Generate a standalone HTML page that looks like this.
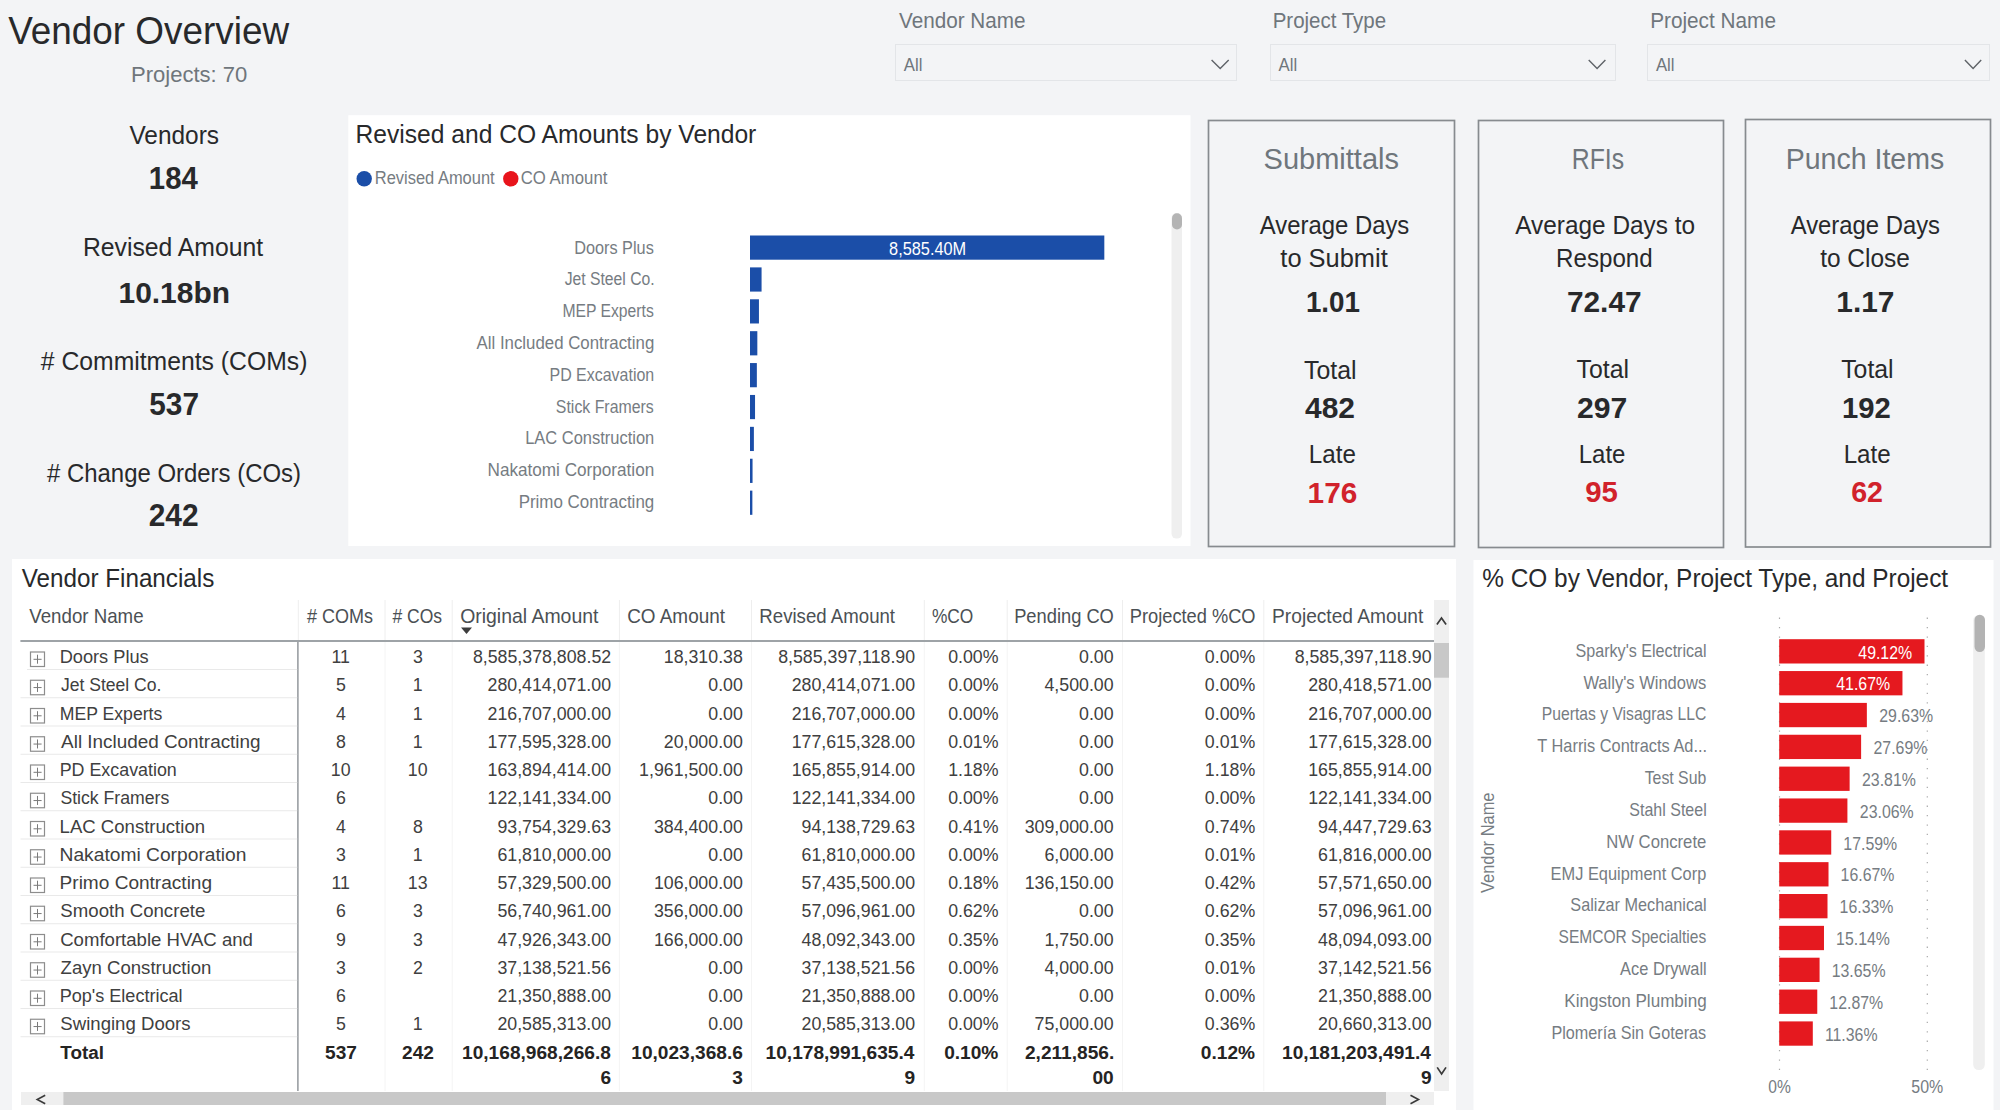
<!DOCTYPE html>
<html><head><meta charset="utf-8"><title>Vendor Overview</title>
<style>
html,body{margin:0;padding:0;background:#f3f4f6;width:2000px;height:1110px;overflow:hidden}
svg{display:block;font-family:"Liberation Sans",sans-serif}
</style></head><body>
<svg width="2000" height="1110" viewBox="0 0 2000 1110">
<rect x="0" y="0" width="2000" height="1110" fill="#f3f4f6"/>
<rect x="895.5" y="44.5" width="341.0" height="36.0" fill="none" stroke="#e3e5e8" stroke-width="1"/>
<rect x="1270.5" y="44.5" width="345.0" height="36.0" fill="none" stroke="#e3e5e8" stroke-width="1"/>
<rect x="1647.5" y="44.5" width="342.0" height="36.0" fill="none" stroke="#e3e5e8" stroke-width="1"/>
<polyline points="1211.6,60 1220.2,68.6 1228.7,60" fill="none" stroke="#5f6368" stroke-width="1.4"/>
<polyline points="1588.7,60 1597.1,68.6 1605.4,60" fill="none" stroke="#5f6368" stroke-width="1.4"/>
<polyline points="1964.9,60 1973.1,68.6 1981.2,60" fill="none" stroke="#5f6368" stroke-width="1.4"/>
<rect x="348.30" y="115.20" width="842.20" height="430.80" fill="#ffffff" />
<circle cx="364.2" cy="178.7" r="7.7" fill="#1b4ea8"/>
<circle cx="510.8" cy="178.8" r="7.7" fill="#e8141c"/>
<rect x="750.00" y="235.50" width="354.32" height="24.20" fill="#1b4ea8" />
<rect x="750.00" y="267.39" width="11.57" height="24.20" fill="#1b4ea8" />
<rect x="750.00" y="299.28" width="8.94" height="24.20" fill="#1b4ea8" />
<rect x="750.00" y="331.17" width="7.33" height="24.20" fill="#1b4ea8" />
<rect x="750.00" y="363.06" width="6.85" height="24.20" fill="#1b4ea8" />
<rect x="750.00" y="394.95" width="5.04" height="24.20" fill="#1b4ea8" />
<rect x="750.00" y="426.84" width="3.88" height="24.20" fill="#1b4ea8" />
<rect x="750.00" y="458.73" width="2.55" height="24.20" fill="#1b4ea8" />
<rect x="750.00" y="490.62" width="2.37" height="24.20" fill="#1b4ea8" />
<rect x="1171.5" y="213" width="10.5" height="325.6" rx="5" fill="#efefef"/>
<rect x="1172" y="213.3" width="10" height="16.2" rx="5" fill="#b4b4b4"/>
<rect x="1208.5" y="120.5" width="246.0" height="426.0" fill="none" stroke="#878b8f" stroke-width="1.7"/>
<rect x="1478.5" y="120.5" width="245.0" height="427.0" fill="none" stroke="#878b8f" stroke-width="1.7"/>
<rect x="1745.5" y="119.5" width="245.0" height="427.5" fill="none" stroke="#878b8f" stroke-width="1.7"/>
<rect x="12.00" y="559.00" width="1444.00" height="551.00" fill="#ffffff" />
<line x1="298.30" y1="600.00" x2="298.30" y2="640.00" stroke="#eeeeee" stroke-width="1" />
<line x1="385.00" y1="600.00" x2="385.00" y2="640.00" stroke="#eeeeee" stroke-width="1" />
<line x1="452.20" y1="600.00" x2="452.20" y2="640.00" stroke="#eeeeee" stroke-width="1" />
<line x1="619.40" y1="600.00" x2="619.40" y2="640.00" stroke="#eeeeee" stroke-width="1" />
<line x1="751.50" y1="600.00" x2="751.50" y2="640.00" stroke="#eeeeee" stroke-width="1" />
<line x1="924.30" y1="600.00" x2="924.30" y2="640.00" stroke="#eeeeee" stroke-width="1" />
<line x1="1007.20" y1="600.00" x2="1007.20" y2="640.00" stroke="#eeeeee" stroke-width="1" />
<line x1="1122.50" y1="600.00" x2="1122.50" y2="640.00" stroke="#eeeeee" stroke-width="1" />
<line x1="1263.80" y1="600.00" x2="1263.80" y2="640.00" stroke="#eeeeee" stroke-width="1" />
<line x1="385.00" y1="642.00" x2="385.00" y2="1091.00" stroke="#f4f4f4" stroke-width="1" />
<line x1="452.20" y1="642.00" x2="452.20" y2="1091.00" stroke="#f4f4f4" stroke-width="1" />
<line x1="619.40" y1="642.00" x2="619.40" y2="1091.00" stroke="#f4f4f4" stroke-width="1" />
<line x1="751.50" y1="642.00" x2="751.50" y2="1091.00" stroke="#f4f4f4" stroke-width="1" />
<line x1="924.30" y1="642.00" x2="924.30" y2="1091.00" stroke="#f4f4f4" stroke-width="1" />
<line x1="1007.20" y1="642.00" x2="1007.20" y2="1091.00" stroke="#f4f4f4" stroke-width="1" />
<line x1="1122.50" y1="642.00" x2="1122.50" y2="1091.00" stroke="#f4f4f4" stroke-width="1" />
<line x1="1263.80" y1="642.00" x2="1263.80" y2="1091.00" stroke="#f4f4f4" stroke-width="1" />
<rect x="20.40" y="640.00" width="1413.60" height="2.00" fill="#9ea3a7" />
<rect x="297.20" y="642.00" width="1.40" height="449.00" fill="#8c9196" />
<rect x="27.00" y="669.00" width="270.20" height="1.00" fill="#e9e9e9" />
<rect x="20.50" y="697.25" width="276.70" height="1.00" fill="#e9e9e9" />
<rect x="20.50" y="725.50" width="276.70" height="1.00" fill="#e9e9e9" />
<rect x="20.50" y="753.75" width="276.70" height="1.00" fill="#e9e9e9" />
<rect x="20.50" y="782.00" width="276.70" height="1.00" fill="#e9e9e9" />
<rect x="20.50" y="810.25" width="276.70" height="1.00" fill="#e9e9e9" />
<rect x="20.50" y="838.50" width="276.70" height="1.00" fill="#e9e9e9" />
<rect x="20.50" y="866.75" width="276.70" height="1.00" fill="#e9e9e9" />
<rect x="20.50" y="895.00" width="276.70" height="1.00" fill="#e9e9e9" />
<rect x="20.50" y="923.25" width="276.70" height="1.00" fill="#e9e9e9" />
<rect x="20.50" y="951.50" width="276.70" height="1.00" fill="#e9e9e9" />
<rect x="20.50" y="979.75" width="276.70" height="1.00" fill="#e9e9e9" />
<rect x="20.50" y="1008.00" width="276.70" height="1.00" fill="#e9e9e9" />
<rect x="20.50" y="1036.25" width="276.70" height="1.00" fill="#e9e9e9" />
<rect x="30.5" y="652.00" width="14" height="14.5" fill="none" stroke="#8d8d8d" stroke-width="1.2"/>
<line x1="33.5" y1="659.30" x2="41.6" y2="659.30" stroke="#7a7a7a" stroke-width="1"/>
<line x1="37.5" y1="654.70" x2="37.5" y2="663.70" stroke="#7a7a7a" stroke-width="1"/>
<rect x="30.5" y="680.25" width="14" height="14.5" fill="none" stroke="#8d8d8d" stroke-width="1.2"/>
<line x1="33.5" y1="687.55" x2="41.6" y2="687.55" stroke="#7a7a7a" stroke-width="1"/>
<line x1="37.5" y1="682.95" x2="37.5" y2="691.95" stroke="#7a7a7a" stroke-width="1"/>
<rect x="30.5" y="708.50" width="14" height="14.5" fill="none" stroke="#8d8d8d" stroke-width="1.2"/>
<line x1="33.5" y1="715.80" x2="41.6" y2="715.80" stroke="#7a7a7a" stroke-width="1"/>
<line x1="37.5" y1="711.20" x2="37.5" y2="720.20" stroke="#7a7a7a" stroke-width="1"/>
<rect x="30.5" y="736.75" width="14" height="14.5" fill="none" stroke="#8d8d8d" stroke-width="1.2"/>
<line x1="33.5" y1="744.05" x2="41.6" y2="744.05" stroke="#7a7a7a" stroke-width="1"/>
<line x1="37.5" y1="739.45" x2="37.5" y2="748.45" stroke="#7a7a7a" stroke-width="1"/>
<rect x="30.5" y="765.00" width="14" height="14.5" fill="none" stroke="#8d8d8d" stroke-width="1.2"/>
<line x1="33.5" y1="772.30" x2="41.6" y2="772.30" stroke="#7a7a7a" stroke-width="1"/>
<line x1="37.5" y1="767.70" x2="37.5" y2="776.70" stroke="#7a7a7a" stroke-width="1"/>
<rect x="30.5" y="793.25" width="14" height="14.5" fill="none" stroke="#8d8d8d" stroke-width="1.2"/>
<line x1="33.5" y1="800.55" x2="41.6" y2="800.55" stroke="#7a7a7a" stroke-width="1"/>
<line x1="37.5" y1="795.95" x2="37.5" y2="804.95" stroke="#7a7a7a" stroke-width="1"/>
<rect x="30.5" y="821.50" width="14" height="14.5" fill="none" stroke="#8d8d8d" stroke-width="1.2"/>
<line x1="33.5" y1="828.80" x2="41.6" y2="828.80" stroke="#7a7a7a" stroke-width="1"/>
<line x1="37.5" y1="824.20" x2="37.5" y2="833.20" stroke="#7a7a7a" stroke-width="1"/>
<rect x="30.5" y="849.75" width="14" height="14.5" fill="none" stroke="#8d8d8d" stroke-width="1.2"/>
<line x1="33.5" y1="857.05" x2="41.6" y2="857.05" stroke="#7a7a7a" stroke-width="1"/>
<line x1="37.5" y1="852.45" x2="37.5" y2="861.45" stroke="#7a7a7a" stroke-width="1"/>
<rect x="30.5" y="878.00" width="14" height="14.5" fill="none" stroke="#8d8d8d" stroke-width="1.2"/>
<line x1="33.5" y1="885.30" x2="41.6" y2="885.30" stroke="#7a7a7a" stroke-width="1"/>
<line x1="37.5" y1="880.70" x2="37.5" y2="889.70" stroke="#7a7a7a" stroke-width="1"/>
<rect x="30.5" y="906.25" width="14" height="14.5" fill="none" stroke="#8d8d8d" stroke-width="1.2"/>
<line x1="33.5" y1="913.55" x2="41.6" y2="913.55" stroke="#7a7a7a" stroke-width="1"/>
<line x1="37.5" y1="908.95" x2="37.5" y2="917.95" stroke="#7a7a7a" stroke-width="1"/>
<rect x="30.5" y="934.50" width="14" height="14.5" fill="none" stroke="#8d8d8d" stroke-width="1.2"/>
<line x1="33.5" y1="941.80" x2="41.6" y2="941.80" stroke="#7a7a7a" stroke-width="1"/>
<line x1="37.5" y1="937.20" x2="37.5" y2="946.20" stroke="#7a7a7a" stroke-width="1"/>
<rect x="30.5" y="962.75" width="14" height="14.5" fill="none" stroke="#8d8d8d" stroke-width="1.2"/>
<line x1="33.5" y1="970.05" x2="41.6" y2="970.05" stroke="#7a7a7a" stroke-width="1"/>
<line x1="37.5" y1="965.45" x2="37.5" y2="974.45" stroke="#7a7a7a" stroke-width="1"/>
<rect x="30.5" y="991.00" width="14" height="14.5" fill="none" stroke="#8d8d8d" stroke-width="1.2"/>
<line x1="33.5" y1="998.30" x2="41.6" y2="998.30" stroke="#7a7a7a" stroke-width="1"/>
<line x1="37.5" y1="993.70" x2="37.5" y2="1002.70" stroke="#7a7a7a" stroke-width="1"/>
<rect x="30.5" y="1019.25" width="14" height="14.5" fill="none" stroke="#8d8d8d" stroke-width="1.2"/>
<line x1="33.5" y1="1026.55" x2="41.6" y2="1026.55" stroke="#7a7a7a" stroke-width="1"/>
<line x1="37.5" y1="1021.95" x2="37.5" y2="1030.95" stroke="#7a7a7a" stroke-width="1"/>
<polygon points="461,627.5 472,627.5 466.5,634" fill="#3d3d3d"/>
<rect x="1434.00" y="600.00" width="15.00" height="491.00" fill="#efefef" />
<rect x="1434.00" y="643.00" width="15.00" height="34.70" fill="#c8c8c8" />
<polyline points="1436.9,624.4 1441.5,618 1446.1,624.4" fill="none" stroke="#3a3a3a" stroke-width="1.7"/>
<polyline points="1437.2,1067.4 1441.6,1074 1446,1067.4" fill="none" stroke="#3a3a3a" stroke-width="1.7"/>
<rect x="21.00" y="1092.00" width="1413.00" height="13.00" fill="#efefef" />
<rect x="63.40" y="1092.00" width="1322.60" height="13.00" fill="#c8c8c8" />
<polyline points="45.2,1095.2 37.2,1099.5 45.2,1103.8" fill="none" stroke="#3a3a3a" stroke-width="1.6"/>
<polyline points="1410.5,1095.2 1418.5,1099.5 1410.5,1103.8" fill="none" stroke="#3a3a3a" stroke-width="1.6"/>
<rect x="1473.50" y="560.00" width="520.00" height="550.00" fill="#ffffff" />
<line x1="1779.5" y1="617.6" x2="1779.5" y2="1071" stroke="#a9a9a9" stroke-width="1.2" stroke-dasharray="1.3,8.1"/>
<line x1="1927.3" y1="617.6" x2="1927.3" y2="1071" stroke="#a9a9a9" stroke-width="1.2" stroke-dasharray="1.3,8.1"/>
<rect x="1779.20" y="639.20" width="145.30" height="24.30" fill="#e5191f" />
<rect x="1779.20" y="671.05" width="123.26" height="24.30" fill="#e5191f" />
<rect x="1779.20" y="702.90" width="87.65" height="24.30" fill="#e5191f" />
<rect x="1779.20" y="734.75" width="81.91" height="24.30" fill="#e5191f" />
<rect x="1779.20" y="766.60" width="70.43" height="24.30" fill="#e5191f" />
<rect x="1779.20" y="798.45" width="68.21" height="24.30" fill="#e5191f" />
<rect x="1779.20" y="830.30" width="52.03" height="24.30" fill="#e5191f" />
<rect x="1779.20" y="862.15" width="49.31" height="24.30" fill="#e5191f" />
<rect x="1779.20" y="894.00" width="48.30" height="24.30" fill="#e5191f" />
<rect x="1779.20" y="925.85" width="44.78" height="24.30" fill="#e5191f" />
<rect x="1779.20" y="957.70" width="40.38" height="24.30" fill="#e5191f" />
<rect x="1779.20" y="989.55" width="38.07" height="24.30" fill="#e5191f" />
<rect x="1779.20" y="1021.40" width="33.60" height="24.30" fill="#e5191f" />
<rect x="1973.2" y="615" width="11.6" height="455" rx="5.5" fill="#efefef"/>
<rect x="1974.5" y="614.8" width="10.5" height="37.2" rx="5.2" fill="#b3b3b3"/>
<text transform="translate(1494,893) rotate(-90)" font-size="18.2" fill="#767c82" textLength="100.5" lengthAdjust="spacingAndGlyphs">Vendor Name</text>
<text x="8.20" y="44.20" font-size="38.52" fill="#28292b" textLength="280.91" lengthAdjust="spacingAndGlyphs">Vendor Overview</text>
<text x="130.94" y="82.20" font-size="21.37" fill="#6f767c" textLength="116.46" lengthAdjust="spacingAndGlyphs">Projects: 70</text>
<text x="129.40" y="144.10" font-size="26.16" fill="#28292b" textLength="89.63" lengthAdjust="spacingAndGlyphs">Vendors</text>
<text x="148.84" y="189.00" font-size="30.81" fill="#28292b" font-weight="bold" textLength="48.95" lengthAdjust="spacingAndGlyphs">184</text>
<text x="82.94" y="256.20" font-size="26.16" fill="#28292b" textLength="180.21" lengthAdjust="spacingAndGlyphs">Revised Amount</text>
<text x="118.50" y="303.00" font-size="30.23" fill="#28292b" font-weight="bold" textLength="111.52" lengthAdjust="spacingAndGlyphs">10.18bn</text>
<text x="40.80" y="369.70" font-size="26.16" fill="#28292b" textLength="266.61" lengthAdjust="spacingAndGlyphs"># Commitments (COMs)</text>
<text x="149.31" y="414.80" font-size="30.81" fill="#28292b" font-weight="bold" textLength="49.67" lengthAdjust="spacingAndGlyphs">537</text>
<text x="47.00" y="482.30" font-size="26.16" fill="#28292b" textLength="253.97" lengthAdjust="spacingAndGlyphs"># Change Orders (COs)</text>
<text x="148.70" y="525.50" font-size="30.81" fill="#28292b" font-weight="bold" textLength="49.88" lengthAdjust="spacingAndGlyphs">242</text>
<text x="899.00" y="27.60" font-size="22.09" fill="#6f767c" textLength="126.55" lengthAdjust="spacingAndGlyphs">Vendor Name</text>
<text x="1272.67" y="27.60" font-size="22.09" fill="#6f767c" textLength="113.47" lengthAdjust="spacingAndGlyphs">Project Type</text>
<text x="1650.14" y="27.80" font-size="22.09" fill="#6f767c" textLength="125.81" lengthAdjust="spacingAndGlyphs">Project Name</text>
<text x="903.80" y="70.70" font-size="18.46" fill="#6f767c" textLength="18.64" lengthAdjust="spacingAndGlyphs">All</text>
<text x="1278.60" y="70.70" font-size="18.46" fill="#6f767c" textLength="18.64" lengthAdjust="spacingAndGlyphs">All</text>
<text x="1655.90" y="70.70" font-size="18.46" fill="#6f767c" textLength="18.64" lengthAdjust="spacingAndGlyphs">All</text>
<text x="355.54" y="142.70" font-size="25.58" fill="#28292b" textLength="400.78" lengthAdjust="spacingAndGlyphs">Revised and CO Amounts by Vendor</text>
<text x="374.79" y="184.20" font-size="18.02" fill="#767c82" textLength="119.87" lengthAdjust="spacingAndGlyphs">Revised Amount</text>
<text x="520.77" y="184.20" font-size="18.02" fill="#767c82" textLength="86.59" lengthAdjust="spacingAndGlyphs">CO Amount</text>
<text x="574.20" y="253.60" font-size="17.44" fill="#767c82" textLength="79.59" lengthAdjust="spacingAndGlyphs">Doors Plus</text>
<text x="564.64" y="285.40" font-size="17.44" fill="#767c82" textLength="90.04" lengthAdjust="spacingAndGlyphs">Jet Steel Co.</text>
<text x="562.45" y="317.20" font-size="17.44" fill="#767c82" textLength="91.32" lengthAdjust="spacingAndGlyphs">MEP Experts</text>
<text x="476.50" y="349.00" font-size="17.44" fill="#767c82" textLength="177.75" lengthAdjust="spacingAndGlyphs">All Included Contracting</text>
<text x="549.52" y="380.80" font-size="17.44" fill="#767c82" textLength="104.67" lengthAdjust="spacingAndGlyphs">PD Excavation</text>
<text x="555.86" y="412.60" font-size="17.44" fill="#767c82" textLength="97.91" lengthAdjust="spacingAndGlyphs">Stick Framers</text>
<text x="525.18" y="444.40" font-size="17.44" fill="#767c82" textLength="129.04" lengthAdjust="spacingAndGlyphs">LAC Construction</text>
<text x="487.53" y="476.20" font-size="17.44" fill="#767c82" textLength="166.73" lengthAdjust="spacingAndGlyphs">Nakatomi Corporation</text>
<text x="518.64" y="508.00" font-size="17.44" fill="#767c82" textLength="135.61" lengthAdjust="spacingAndGlyphs">Primo Contracting</text>
<text x="889.05" y="255.40" font-size="17.73" fill="#ffffff" textLength="77.14" lengthAdjust="spacingAndGlyphs">8,585.40M</text>
<text x="1263.54" y="168.80" font-size="30.23" fill="#6f767c" textLength="135.43" lengthAdjust="spacingAndGlyphs">Submittals</text>
<text x="1259.80" y="233.70" font-size="25.00" fill="#28292b" textLength="149.52" lengthAdjust="spacingAndGlyphs">Average Days</text>
<text x="1280.35" y="267.40" font-size="25.00" fill="#28292b" textLength="107.40" lengthAdjust="spacingAndGlyphs">to Submit</text>
<text x="1305.93" y="312.10" font-size="29.36" fill="#28292b" font-weight="bold" textLength="54.09" lengthAdjust="spacingAndGlyphs">1.01</text>
<text x="1304.00" y="378.80" font-size="26.16" fill="#28292b" textLength="52.54" lengthAdjust="spacingAndGlyphs">Total</text>
<text x="1305.00" y="418.40" font-size="29.65" fill="#28292b" font-weight="bold" textLength="49.98" lengthAdjust="spacingAndGlyphs">482</text>
<text x="1308.76" y="463.10" font-size="26.16" fill="#28292b" textLength="47.11" lengthAdjust="spacingAndGlyphs">Late</text>
<text x="1307.61" y="502.60" font-size="29.65" fill="#d1222b" font-weight="bold" textLength="49.77" lengthAdjust="spacingAndGlyphs">176</text>
<text x="1571.82" y="168.70" font-size="30.23" fill="#6f767c" textLength="52.33" lengthAdjust="spacingAndGlyphs">RFIs</text>
<text x="1515.30" y="233.60" font-size="25.00" fill="#28292b" textLength="179.78" lengthAdjust="spacingAndGlyphs">Average Days to</text>
<text x="1556.07" y="267.20" font-size="25.00" fill="#28292b" textLength="96.59" lengthAdjust="spacingAndGlyphs">Respond</text>
<text x="1566.91" y="311.90" font-size="29.36" fill="#28292b" font-weight="bold" textLength="74.67" lengthAdjust="spacingAndGlyphs">72.47</text>
<text x="1576.60" y="378.40" font-size="26.16" fill="#28292b" textLength="52.44" lengthAdjust="spacingAndGlyphs">Total</text>
<text x="1576.90" y="418.00" font-size="29.65" fill="#28292b" font-weight="bold" textLength="50.29" lengthAdjust="spacingAndGlyphs">297</text>
<text x="1578.78" y="463.00" font-size="26.16" fill="#28292b" textLength="46.69" lengthAdjust="spacingAndGlyphs">Late</text>
<text x="1585.22" y="502.10" font-size="29.65" fill="#d1222b" font-weight="bold" textLength="32.65" lengthAdjust="spacingAndGlyphs">95</text>
<text x="1785.72" y="168.70" font-size="30.23" fill="#6f767c" textLength="158.44" lengthAdjust="spacingAndGlyphs">Punch Items</text>
<text x="1790.70" y="233.60" font-size="25.00" fill="#28292b" textLength="149.32" lengthAdjust="spacingAndGlyphs">Average Days</text>
<text x="1820.16" y="267.20" font-size="25.00" fill="#28292b" textLength="89.73" lengthAdjust="spacingAndGlyphs">to Close</text>
<text x="1836.31" y="311.90" font-size="29.36" fill="#28292b" font-weight="bold" textLength="58.17" lengthAdjust="spacingAndGlyphs">1.17</text>
<text x="1841.20" y="378.40" font-size="26.16" fill="#28292b" textLength="52.44" lengthAdjust="spacingAndGlyphs">Total</text>
<text x="1842.04" y="418.00" font-size="29.65" fill="#28292b" font-weight="bold" textLength="48.81" lengthAdjust="spacingAndGlyphs">192</text>
<text x="1843.67" y="463.00" font-size="26.16" fill="#28292b" textLength="47.01" lengthAdjust="spacingAndGlyphs">Late</text>
<text x="1851.14" y="502.00" font-size="29.65" fill="#d1222b" font-weight="bold" textLength="31.90" lengthAdjust="spacingAndGlyphs">62</text>
<text x="21.70" y="586.90" font-size="26.02" fill="#28292b" textLength="192.63" lengthAdjust="spacingAndGlyphs">Vendor Financials</text>
<text x="29.30" y="623.00" font-size="19.48" fill="#4b5054" textLength="114.28" lengthAdjust="spacingAndGlyphs">Vendor Name</text>
<text x="307.00" y="623.00" font-size="19.48" fill="#4b5054" textLength="65.94" lengthAdjust="spacingAndGlyphs"># COMs</text>
<text x="392.50" y="623.00" font-size="19.48" fill="#4b5054" textLength="49.63" lengthAdjust="spacingAndGlyphs"># COs</text>
<text x="460.13" y="623.00" font-size="19.48" fill="#4b5054" textLength="138.33" lengthAdjust="spacingAndGlyphs">Original Amount</text>
<text x="627.16" y="623.00" font-size="19.48" fill="#4b5054" textLength="97.80" lengthAdjust="spacingAndGlyphs">CO Amount</text>
<text x="759.32" y="623.00" font-size="19.48" fill="#4b5054" textLength="135.74" lengthAdjust="spacingAndGlyphs">Revised Amount</text>
<text x="931.88" y="623.00" font-size="19.48" fill="#4b5054" textLength="41.45" lengthAdjust="spacingAndGlyphs">%CO</text>
<text x="1014.14" y="623.00" font-size="19.48" fill="#4b5054" textLength="99.74" lengthAdjust="spacingAndGlyphs">Pending CO</text>
<text x="1129.84" y="623.00" font-size="19.48" fill="#4b5054" textLength="125.73" lengthAdjust="spacingAndGlyphs">Projected %CO</text>
<text x="1272.08" y="623.00" font-size="19.48" fill="#4b5054" textLength="151.18" lengthAdjust="spacingAndGlyphs">Projected Amount</text>
<text x="59.64" y="663.10" font-size="18.90" fill="#404040" textLength="89.10" lengthAdjust="spacingAndGlyphs">Doors Plus</text>
<text x="331.57" y="663.10" font-size="18.90" fill="#404040" textLength="18.45" lengthAdjust="spacingAndGlyphs">11</text>
<text x="413.11" y="663.10" font-size="18.90" fill="#404040" textLength="9.88" lengthAdjust="spacingAndGlyphs">3</text>
<text x="472.89" y="663.10" font-size="18.90" fill="#404040" textLength="138.33" lengthAdjust="spacingAndGlyphs">8,585,378,808.52</text>
<text x="663.79" y="663.10" font-size="18.90" fill="#404040" textLength="79.05" lengthAdjust="spacingAndGlyphs">18,310.38</text>
<text x="778.13" y="663.10" font-size="18.90" fill="#404040" textLength="137.01" lengthAdjust="spacingAndGlyphs">8,585,397,118.90</text>
<text x="948.14" y="663.10" font-size="18.90" fill="#404040" textLength="50.38" lengthAdjust="spacingAndGlyphs">0.00%</text>
<text x="1079.06" y="663.10" font-size="18.90" fill="#404040" textLength="34.58" lengthAdjust="spacingAndGlyphs">0.00</text>
<text x="1204.84" y="663.10" font-size="18.90" fill="#404040" textLength="50.38" lengthAdjust="spacingAndGlyphs">0.00%</text>
<text x="1294.63" y="663.10" font-size="18.90" fill="#404040" textLength="137.01" lengthAdjust="spacingAndGlyphs">8,585,397,118.90</text>
<text x="60.92" y="691.35" font-size="18.90" fill="#404040" textLength="100.52" lengthAdjust="spacingAndGlyphs">Jet Steel Co.</text>
<text x="336.02" y="691.35" font-size="18.90" fill="#404040" textLength="9.88" lengthAdjust="spacingAndGlyphs">5</text>
<text x="412.85" y="691.35" font-size="18.90" fill="#404040" textLength="9.88" lengthAdjust="spacingAndGlyphs">1</text>
<text x="487.53" y="691.35" font-size="18.90" fill="#404040" textLength="123.51" lengthAdjust="spacingAndGlyphs">280,414,071.00</text>
<text x="708.26" y="691.35" font-size="18.90" fill="#404040" textLength="34.58" lengthAdjust="spacingAndGlyphs">0.00</text>
<text x="791.63" y="691.35" font-size="18.90" fill="#404040" textLength="123.51" lengthAdjust="spacingAndGlyphs">280,414,071.00</text>
<text x="948.14" y="691.35" font-size="18.90" fill="#404040" textLength="50.38" lengthAdjust="spacingAndGlyphs">0.00%</text>
<text x="1044.48" y="691.35" font-size="18.90" fill="#404040" textLength="69.17" lengthAdjust="spacingAndGlyphs">4,500.00</text>
<text x="1204.84" y="691.35" font-size="18.90" fill="#404040" textLength="50.38" lengthAdjust="spacingAndGlyphs">0.00%</text>
<text x="1308.13" y="691.35" font-size="18.90" fill="#404040" textLength="123.51" lengthAdjust="spacingAndGlyphs">280,418,571.00</text>
<text x="59.69" y="719.60" font-size="18.90" fill="#404040" textLength="102.63" lengthAdjust="spacingAndGlyphs">MEP Experts</text>
<text x="336.11" y="719.60" font-size="18.90" fill="#404040" textLength="9.88" lengthAdjust="spacingAndGlyphs">4</text>
<text x="412.85" y="719.60" font-size="18.90" fill="#404040" textLength="9.88" lengthAdjust="spacingAndGlyphs">1</text>
<text x="487.53" y="719.60" font-size="18.90" fill="#404040" textLength="123.51" lengthAdjust="spacingAndGlyphs">216,707,000.00</text>
<text x="708.26" y="719.60" font-size="18.90" fill="#404040" textLength="34.58" lengthAdjust="spacingAndGlyphs">0.00</text>
<text x="791.63" y="719.60" font-size="18.90" fill="#404040" textLength="123.51" lengthAdjust="spacingAndGlyphs">216,707,000.00</text>
<text x="948.14" y="719.60" font-size="18.90" fill="#404040" textLength="50.38" lengthAdjust="spacingAndGlyphs">0.00%</text>
<text x="1079.06" y="719.60" font-size="18.90" fill="#404040" textLength="34.58" lengthAdjust="spacingAndGlyphs">0.00</text>
<text x="1204.84" y="719.60" font-size="18.90" fill="#404040" textLength="50.38" lengthAdjust="spacingAndGlyphs">0.00%</text>
<text x="1308.13" y="719.60" font-size="18.90" fill="#404040" textLength="123.51" lengthAdjust="spacingAndGlyphs">216,707,000.00</text>
<text x="61.10" y="747.85" font-size="18.90" fill="#404040" textLength="199.46" lengthAdjust="spacingAndGlyphs">All Included Contracting</text>
<text x="336.02" y="747.85" font-size="18.90" fill="#404040" textLength="9.88" lengthAdjust="spacingAndGlyphs">8</text>
<text x="412.85" y="747.85" font-size="18.90" fill="#404040" textLength="9.88" lengthAdjust="spacingAndGlyphs">1</text>
<text x="487.53" y="747.85" font-size="18.90" fill="#404040" textLength="123.51" lengthAdjust="spacingAndGlyphs">177,595,328.00</text>
<text x="663.79" y="747.85" font-size="18.90" fill="#404040" textLength="79.05" lengthAdjust="spacingAndGlyphs">20,000.00</text>
<text x="791.63" y="747.85" font-size="18.90" fill="#404040" textLength="123.51" lengthAdjust="spacingAndGlyphs">177,615,328.00</text>
<text x="948.14" y="747.85" font-size="18.90" fill="#404040" textLength="50.38" lengthAdjust="spacingAndGlyphs">0.01%</text>
<text x="1079.06" y="747.85" font-size="18.90" fill="#404040" textLength="34.58" lengthAdjust="spacingAndGlyphs">0.00</text>
<text x="1204.84" y="747.85" font-size="18.90" fill="#404040" textLength="50.38" lengthAdjust="spacingAndGlyphs">0.01%</text>
<text x="1308.13" y="747.85" font-size="18.90" fill="#404040" textLength="123.51" lengthAdjust="spacingAndGlyphs">177,615,328.00</text>
<text x="59.67" y="776.10" font-size="18.90" fill="#404040" textLength="117.13" lengthAdjust="spacingAndGlyphs">PD Excavation</text>
<text x="330.82" y="776.10" font-size="18.90" fill="#404040" textLength="19.76" lengthAdjust="spacingAndGlyphs">10</text>
<text x="407.82" y="776.10" font-size="18.90" fill="#404040" textLength="19.76" lengthAdjust="spacingAndGlyphs">10</text>
<text x="487.53" y="776.10" font-size="18.90" fill="#404040" textLength="123.51" lengthAdjust="spacingAndGlyphs">163,894,414.00</text>
<text x="639.09" y="776.10" font-size="18.90" fill="#404040" textLength="103.75" lengthAdjust="spacingAndGlyphs">1,961,500.00</text>
<text x="791.63" y="776.10" font-size="18.90" fill="#404040" textLength="123.51" lengthAdjust="spacingAndGlyphs">165,855,914.00</text>
<text x="948.14" y="776.10" font-size="18.90" fill="#404040" textLength="50.38" lengthAdjust="spacingAndGlyphs">1.18%</text>
<text x="1079.06" y="776.10" font-size="18.90" fill="#404040" textLength="34.58" lengthAdjust="spacingAndGlyphs">0.00</text>
<text x="1204.84" y="776.10" font-size="18.90" fill="#404040" textLength="50.38" lengthAdjust="spacingAndGlyphs">1.18%</text>
<text x="1308.13" y="776.10" font-size="18.90" fill="#404040" textLength="123.51" lengthAdjust="spacingAndGlyphs">165,855,914.00</text>
<text x="60.39" y="804.35" font-size="18.90" fill="#404040" textLength="108.94" lengthAdjust="spacingAndGlyphs">Stick Framers</text>
<text x="335.94" y="804.35" font-size="18.90" fill="#404040" textLength="9.88" lengthAdjust="spacingAndGlyphs">6</text>
<text x="487.53" y="804.35" font-size="18.90" fill="#404040" textLength="123.51" lengthAdjust="spacingAndGlyphs">122,141,334.00</text>
<text x="708.26" y="804.35" font-size="18.90" fill="#404040" textLength="34.58" lengthAdjust="spacingAndGlyphs">0.00</text>
<text x="791.63" y="804.35" font-size="18.90" fill="#404040" textLength="123.51" lengthAdjust="spacingAndGlyphs">122,141,334.00</text>
<text x="948.14" y="804.35" font-size="18.90" fill="#404040" textLength="50.38" lengthAdjust="spacingAndGlyphs">0.00%</text>
<text x="1079.06" y="804.35" font-size="18.90" fill="#404040" textLength="34.58" lengthAdjust="spacingAndGlyphs">0.00</text>
<text x="1204.84" y="804.35" font-size="18.90" fill="#404040" textLength="50.38" lengthAdjust="spacingAndGlyphs">0.00%</text>
<text x="1308.13" y="804.35" font-size="18.90" fill="#404040" textLength="123.51" lengthAdjust="spacingAndGlyphs">122,141,334.00</text>
<text x="59.62" y="832.60" font-size="18.90" fill="#404040" textLength="145.43" lengthAdjust="spacingAndGlyphs">LAC Construction</text>
<text x="336.11" y="832.60" font-size="18.90" fill="#404040" textLength="9.88" lengthAdjust="spacingAndGlyphs">4</text>
<text x="413.02" y="832.60" font-size="18.90" fill="#404040" textLength="9.88" lengthAdjust="spacingAndGlyphs">8</text>
<text x="497.41" y="832.60" font-size="18.90" fill="#404040" textLength="113.63" lengthAdjust="spacingAndGlyphs">93,754,329.63</text>
<text x="653.91" y="832.60" font-size="18.90" fill="#404040" textLength="88.93" lengthAdjust="spacingAndGlyphs">384,400.00</text>
<text x="801.51" y="832.60" font-size="18.90" fill="#404040" textLength="113.63" lengthAdjust="spacingAndGlyphs">94,138,729.63</text>
<text x="948.14" y="832.60" font-size="18.90" fill="#404040" textLength="50.38" lengthAdjust="spacingAndGlyphs">0.41%</text>
<text x="1024.71" y="832.60" font-size="18.90" fill="#404040" textLength="88.93" lengthAdjust="spacingAndGlyphs">309,000.00</text>
<text x="1204.84" y="832.60" font-size="18.90" fill="#404040" textLength="50.38" lengthAdjust="spacingAndGlyphs">0.74%</text>
<text x="1318.01" y="832.60" font-size="18.90" fill="#404040" textLength="113.63" lengthAdjust="spacingAndGlyphs">94,447,729.63</text>
<text x="59.56" y="860.85" font-size="18.90" fill="#404040" textLength="186.92" lengthAdjust="spacingAndGlyphs">Nakatomi Corporation</text>
<text x="336.11" y="860.85" font-size="18.90" fill="#404040" textLength="9.88" lengthAdjust="spacingAndGlyphs">3</text>
<text x="412.85" y="860.85" font-size="18.90" fill="#404040" textLength="9.88" lengthAdjust="spacingAndGlyphs">1</text>
<text x="497.41" y="860.85" font-size="18.90" fill="#404040" textLength="113.63" lengthAdjust="spacingAndGlyphs">61,810,000.00</text>
<text x="708.26" y="860.85" font-size="18.90" fill="#404040" textLength="34.58" lengthAdjust="spacingAndGlyphs">0.00</text>
<text x="801.51" y="860.85" font-size="18.90" fill="#404040" textLength="113.63" lengthAdjust="spacingAndGlyphs">61,810,000.00</text>
<text x="948.14" y="860.85" font-size="18.90" fill="#404040" textLength="50.38" lengthAdjust="spacingAndGlyphs">0.00%</text>
<text x="1044.48" y="860.85" font-size="18.90" fill="#404040" textLength="69.17" lengthAdjust="spacingAndGlyphs">6,000.00</text>
<text x="1204.84" y="860.85" font-size="18.90" fill="#404040" textLength="50.38" lengthAdjust="spacingAndGlyphs">0.01%</text>
<text x="1318.01" y="860.85" font-size="18.90" fill="#404040" textLength="113.63" lengthAdjust="spacingAndGlyphs">61,816,000.00</text>
<text x="59.58" y="889.10" font-size="18.90" fill="#404040" textLength="152.49" lengthAdjust="spacingAndGlyphs">Primo Contracting</text>
<text x="331.57" y="889.10" font-size="18.90" fill="#404040" textLength="18.45" lengthAdjust="spacingAndGlyphs">11</text>
<text x="407.82" y="889.10" font-size="18.90" fill="#404040" textLength="19.76" lengthAdjust="spacingAndGlyphs">13</text>
<text x="497.41" y="889.10" font-size="18.90" fill="#404040" textLength="113.63" lengthAdjust="spacingAndGlyphs">57,329,500.00</text>
<text x="653.91" y="889.10" font-size="18.90" fill="#404040" textLength="88.93" lengthAdjust="spacingAndGlyphs">106,000.00</text>
<text x="801.51" y="889.10" font-size="18.90" fill="#404040" textLength="113.63" lengthAdjust="spacingAndGlyphs">57,435,500.00</text>
<text x="948.14" y="889.10" font-size="18.90" fill="#404040" textLength="50.38" lengthAdjust="spacingAndGlyphs">0.18%</text>
<text x="1024.71" y="889.10" font-size="18.90" fill="#404040" textLength="88.93" lengthAdjust="spacingAndGlyphs">136,150.00</text>
<text x="1204.84" y="889.10" font-size="18.90" fill="#404040" textLength="50.38" lengthAdjust="spacingAndGlyphs">0.42%</text>
<text x="1318.01" y="889.10" font-size="18.90" fill="#404040" textLength="113.63" lengthAdjust="spacingAndGlyphs">57,571,650.00</text>
<text x="60.36" y="917.35" font-size="18.90" fill="#404040" textLength="144.92" lengthAdjust="spacingAndGlyphs">Smooth Concrete</text>
<text x="335.94" y="917.35" font-size="18.90" fill="#404040" textLength="9.88" lengthAdjust="spacingAndGlyphs">6</text>
<text x="413.11" y="917.35" font-size="18.90" fill="#404040" textLength="9.88" lengthAdjust="spacingAndGlyphs">3</text>
<text x="497.41" y="917.35" font-size="18.90" fill="#404040" textLength="113.63" lengthAdjust="spacingAndGlyphs">56,740,961.00</text>
<text x="653.91" y="917.35" font-size="18.90" fill="#404040" textLength="88.93" lengthAdjust="spacingAndGlyphs">356,000.00</text>
<text x="801.51" y="917.35" font-size="18.90" fill="#404040" textLength="113.63" lengthAdjust="spacingAndGlyphs">57,096,961.00</text>
<text x="948.14" y="917.35" font-size="18.90" fill="#404040" textLength="50.38" lengthAdjust="spacingAndGlyphs">0.62%</text>
<text x="1079.06" y="917.35" font-size="18.90" fill="#404040" textLength="34.58" lengthAdjust="spacingAndGlyphs">0.00</text>
<text x="1204.84" y="917.35" font-size="18.90" fill="#404040" textLength="50.38" lengthAdjust="spacingAndGlyphs">0.62%</text>
<text x="1318.01" y="917.35" font-size="18.90" fill="#404040" textLength="113.63" lengthAdjust="spacingAndGlyphs">57,096,961.00</text>
<text x="60.17" y="945.60" font-size="18.90" fill="#404040" textLength="192.77" lengthAdjust="spacingAndGlyphs">Comfortable HVAC and</text>
<text x="336.11" y="945.60" font-size="18.90" fill="#404040" textLength="9.88" lengthAdjust="spacingAndGlyphs">9</text>
<text x="413.11" y="945.60" font-size="18.90" fill="#404040" textLength="9.88" lengthAdjust="spacingAndGlyphs">3</text>
<text x="497.41" y="945.60" font-size="18.90" fill="#404040" textLength="113.63" lengthAdjust="spacingAndGlyphs">47,926,343.00</text>
<text x="653.91" y="945.60" font-size="18.90" fill="#404040" textLength="88.93" lengthAdjust="spacingAndGlyphs">166,000.00</text>
<text x="801.51" y="945.60" font-size="18.90" fill="#404040" textLength="113.63" lengthAdjust="spacingAndGlyphs">48,092,343.00</text>
<text x="948.14" y="945.60" font-size="18.90" fill="#404040" textLength="50.38" lengthAdjust="spacingAndGlyphs">0.35%</text>
<text x="1044.48" y="945.60" font-size="18.90" fill="#404040" textLength="69.17" lengthAdjust="spacingAndGlyphs">1,750.00</text>
<text x="1204.84" y="945.60" font-size="18.90" fill="#404040" textLength="50.38" lengthAdjust="spacingAndGlyphs">0.35%</text>
<text x="1318.01" y="945.60" font-size="18.90" fill="#404040" textLength="113.63" lengthAdjust="spacingAndGlyphs">48,094,093.00</text>
<text x="60.54" y="973.85" font-size="18.90" fill="#404040" textLength="150.80" lengthAdjust="spacingAndGlyphs">Zayn Construction</text>
<text x="336.11" y="973.85" font-size="18.90" fill="#404040" textLength="9.88" lengthAdjust="spacingAndGlyphs">3</text>
<text x="413.02" y="973.85" font-size="18.90" fill="#404040" textLength="9.88" lengthAdjust="spacingAndGlyphs">2</text>
<text x="497.41" y="973.85" font-size="18.90" fill="#404040" textLength="113.63" lengthAdjust="spacingAndGlyphs">37,138,521.56</text>
<text x="708.26" y="973.85" font-size="18.90" fill="#404040" textLength="34.58" lengthAdjust="spacingAndGlyphs">0.00</text>
<text x="801.51" y="973.85" font-size="18.90" fill="#404040" textLength="113.63" lengthAdjust="spacingAndGlyphs">37,138,521.56</text>
<text x="948.14" y="973.85" font-size="18.90" fill="#404040" textLength="50.38" lengthAdjust="spacingAndGlyphs">0.00%</text>
<text x="1044.48" y="973.85" font-size="18.90" fill="#404040" textLength="69.17" lengthAdjust="spacingAndGlyphs">4,000.00</text>
<text x="1204.84" y="973.85" font-size="18.90" fill="#404040" textLength="50.38" lengthAdjust="spacingAndGlyphs">0.01%</text>
<text x="1318.01" y="973.85" font-size="18.90" fill="#404040" textLength="113.63" lengthAdjust="spacingAndGlyphs">37,142,521.56</text>
<text x="59.65" y="1002.10" font-size="18.90" fill="#404040" textLength="122.97" lengthAdjust="spacingAndGlyphs">Pop's Electrical</text>
<text x="335.94" y="1002.10" font-size="18.90" fill="#404040" textLength="9.88" lengthAdjust="spacingAndGlyphs">6</text>
<text x="497.41" y="1002.10" font-size="18.90" fill="#404040" textLength="113.63" lengthAdjust="spacingAndGlyphs">21,350,888.00</text>
<text x="708.26" y="1002.10" font-size="18.90" fill="#404040" textLength="34.58" lengthAdjust="spacingAndGlyphs">0.00</text>
<text x="801.51" y="1002.10" font-size="18.90" fill="#404040" textLength="113.63" lengthAdjust="spacingAndGlyphs">21,350,888.00</text>
<text x="948.14" y="1002.10" font-size="18.90" fill="#404040" textLength="50.38" lengthAdjust="spacingAndGlyphs">0.00%</text>
<text x="1079.06" y="1002.10" font-size="18.90" fill="#404040" textLength="34.58" lengthAdjust="spacingAndGlyphs">0.00</text>
<text x="1204.84" y="1002.10" font-size="18.90" fill="#404040" textLength="50.38" lengthAdjust="spacingAndGlyphs">0.00%</text>
<text x="1318.01" y="1002.10" font-size="18.90" fill="#404040" textLength="113.63" lengthAdjust="spacingAndGlyphs">21,350,888.00</text>
<text x="60.36" y="1030.35" font-size="18.90" fill="#404040" textLength="130.20" lengthAdjust="spacingAndGlyphs">Swinging Doors</text>
<text x="336.02" y="1030.35" font-size="18.90" fill="#404040" textLength="9.88" lengthAdjust="spacingAndGlyphs">5</text>
<text x="412.85" y="1030.35" font-size="18.90" fill="#404040" textLength="9.88" lengthAdjust="spacingAndGlyphs">1</text>
<text x="497.41" y="1030.35" font-size="18.90" fill="#404040" textLength="113.63" lengthAdjust="spacingAndGlyphs">20,585,313.00</text>
<text x="708.26" y="1030.35" font-size="18.90" fill="#404040" textLength="34.58" lengthAdjust="spacingAndGlyphs">0.00</text>
<text x="801.51" y="1030.35" font-size="18.90" fill="#404040" textLength="113.63" lengthAdjust="spacingAndGlyphs">20,585,313.00</text>
<text x="948.14" y="1030.35" font-size="18.90" fill="#404040" textLength="50.38" lengthAdjust="spacingAndGlyphs">0.00%</text>
<text x="1034.59" y="1030.35" font-size="18.90" fill="#404040" textLength="79.05" lengthAdjust="spacingAndGlyphs">75,000.00</text>
<text x="1204.84" y="1030.35" font-size="18.90" fill="#404040" textLength="50.38" lengthAdjust="spacingAndGlyphs">0.36%</text>
<text x="1318.01" y="1030.35" font-size="18.90" fill="#404040" textLength="113.63" lengthAdjust="spacingAndGlyphs">20,660,313.00</text>
<text x="60.31" y="1058.60" font-size="18.90" fill="#252423" font-weight="bold" textLength="43.67" lengthAdjust="spacingAndGlyphs">Total</text>
<text x="325.11" y="1058.60" font-size="18.90" fill="#252423" font-weight="bold" textLength="31.90" lengthAdjust="spacingAndGlyphs">537</text>
<text x="402.11" y="1058.60" font-size="18.90" fill="#252423" font-weight="bold" textLength="31.90" lengthAdjust="spacingAndGlyphs">242</text>
<text x="462.06" y="1058.60" font-size="18.90" fill="#252423" font-weight="bold" textLength="148.84" lengthAdjust="spacingAndGlyphs">10,168,968,266.8</text>
<text x="600.46" y="1084.00" font-size="18.90" fill="#252423" font-weight="bold" textLength="10.63" lengthAdjust="spacingAndGlyphs">6</text>
<text x="631.26" y="1058.60" font-size="18.90" fill="#252423" font-weight="bold" textLength="111.63" lengthAdjust="spacingAndGlyphs">10,023,368.6</text>
<text x="732.26" y="1084.00" font-size="18.90" fill="#252423" font-weight="bold" textLength="10.63" lengthAdjust="spacingAndGlyphs">3</text>
<text x="765.58" y="1058.60" font-size="18.90" fill="#252423" font-weight="bold" textLength="148.84" lengthAdjust="spacingAndGlyphs">10,178,991,635.4</text>
<text x="904.56" y="1084.00" font-size="18.90" fill="#252423" font-weight="bold" textLength="10.63" lengthAdjust="spacingAndGlyphs">9</text>
<text x="1024.98" y="1058.60" font-size="18.90" fill="#252423" font-weight="bold" textLength="89.31" lengthAdjust="spacingAndGlyphs">2,211,856.</text>
<text x="1092.43" y="1084.00" font-size="18.90" fill="#252423" font-weight="bold" textLength="21.27" lengthAdjust="spacingAndGlyphs">00</text>
<text x="1282.08" y="1058.60" font-size="18.90" fill="#252423" font-weight="bold" textLength="148.84" lengthAdjust="spacingAndGlyphs">10,181,203,491.4</text>
<text x="1421.06" y="1084.00" font-size="18.90" fill="#252423" font-weight="bold" textLength="10.63" lengthAdjust="spacingAndGlyphs">9</text>
<text x="944.16" y="1058.60" font-size="18.90" fill="#252423" font-weight="bold" textLength="54.21" lengthAdjust="spacingAndGlyphs">0.10%</text>
<text x="1200.86" y="1058.60" font-size="18.90" fill="#252423" font-weight="bold" textLength="54.21" lengthAdjust="spacingAndGlyphs">0.12%</text>
<text x="1482.27" y="587.00" font-size="25.44" fill="#28292b" textLength="465.88" lengthAdjust="spacingAndGlyphs">% CO by Vendor, Project Type, and Project</text>
<text x="1575.45" y="656.80" font-size="18.17" fill="#767c82" textLength="131.25" lengthAdjust="spacingAndGlyphs">Sparky's Electrical</text>
<text x="1858.30" y="658.60" font-size="17.44" fill="#ffffff" textLength="53.86" lengthAdjust="spacingAndGlyphs">49.12%</text>
<text x="1583.40" y="688.62" font-size="18.17" fill="#767c82" textLength="122.80" lengthAdjust="spacingAndGlyphs">Wally's Windows</text>
<text x="1836.27" y="690.44" font-size="17.44" fill="#ffffff" textLength="53.86" lengthAdjust="spacingAndGlyphs">41.67%</text>
<text x="1541.85" y="720.44" font-size="18.17" fill="#767c82" textLength="164.36" lengthAdjust="spacingAndGlyphs">Puertas y Visagras LLC</text>
<text x="1879.25" y="722.28" font-size="17.44" fill="#767c82" textLength="53.86" lengthAdjust="spacingAndGlyphs">29.63%</text>
<text x="1537.27" y="752.26" font-size="18.17" fill="#767c82" textLength="169.85" lengthAdjust="spacingAndGlyphs">T Harris Contracts Ad...</text>
<text x="1873.51" y="754.12" font-size="17.44" fill="#767c82" textLength="53.86" lengthAdjust="spacingAndGlyphs">27.69%</text>
<text x="1644.68" y="784.08" font-size="18.17" fill="#767c82" textLength="61.59" lengthAdjust="spacingAndGlyphs">Test Sub</text>
<text x="1862.04" y="785.96" font-size="17.44" fill="#767c82" textLength="53.86" lengthAdjust="spacingAndGlyphs">23.81%</text>
<text x="1629.36" y="815.90" font-size="18.17" fill="#767c82" textLength="77.33" lengthAdjust="spacingAndGlyphs">Stahl Steel</text>
<text x="1859.82" y="817.80" font-size="17.44" fill="#767c82" textLength="53.86" lengthAdjust="spacingAndGlyphs">23.06%</text>
<text x="1606.17" y="847.72" font-size="18.17" fill="#767c82" textLength="100.14" lengthAdjust="spacingAndGlyphs">NW Concrete</text>
<text x="1843.32" y="849.64" font-size="17.44" fill="#767c82" textLength="53.86" lengthAdjust="spacingAndGlyphs">17.59%</text>
<text x="1550.59" y="879.54" font-size="18.17" fill="#767c82" textLength="155.70" lengthAdjust="spacingAndGlyphs">EMJ Equipment Corp</text>
<text x="1840.60" y="881.48" font-size="17.44" fill="#767c82" textLength="53.86" lengthAdjust="spacingAndGlyphs">16.67%</text>
<text x="1570.35" y="911.36" font-size="18.17" fill="#767c82" textLength="136.36" lengthAdjust="spacingAndGlyphs">Salizar Mechanical</text>
<text x="1839.59" y="913.32" font-size="17.44" fill="#767c82" textLength="53.86" lengthAdjust="spacingAndGlyphs">16.33%</text>
<text x="1558.58" y="943.18" font-size="18.17" fill="#767c82" textLength="147.59" lengthAdjust="spacingAndGlyphs">SEMCOR Specialties</text>
<text x="1836.07" y="945.16" font-size="17.44" fill="#767c82" textLength="53.86" lengthAdjust="spacingAndGlyphs">15.14%</text>
<text x="1620.10" y="975.00" font-size="18.17" fill="#767c82" textLength="86.62" lengthAdjust="spacingAndGlyphs">Ace Drywall</text>
<text x="1831.67" y="977.00" font-size="17.44" fill="#767c82" textLength="53.86" lengthAdjust="spacingAndGlyphs">13.65%</text>
<text x="1564.33" y="1006.82" font-size="18.17" fill="#767c82" textLength="142.32" lengthAdjust="spacingAndGlyphs">Kingston Plumbing</text>
<text x="1829.36" y="1008.84" font-size="17.44" fill="#767c82" textLength="53.86" lengthAdjust="spacingAndGlyphs">12.87%</text>
<text x="1551.40" y="1038.64" font-size="18.17" fill="#767c82" textLength="154.78" lengthAdjust="spacingAndGlyphs">Plomería Sin Goteras</text>
<text x="1824.89" y="1040.68" font-size="17.44" fill="#767c82" textLength="52.68" lengthAdjust="spacingAndGlyphs">11.36%</text>
<text x="1768.33" y="1092.60" font-size="17.44" fill="#767c82" textLength="22.52" lengthAdjust="spacingAndGlyphs">0%</text>
<text x="1911.36" y="1092.60" font-size="17.44" fill="#767c82" textLength="31.90" lengthAdjust="spacingAndGlyphs">50%</text>
</svg>
</body></html>
